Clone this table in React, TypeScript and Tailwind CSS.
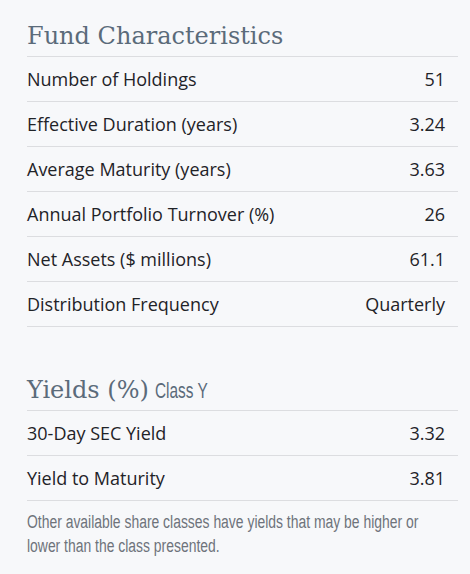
const characteristics = [
  { label: "Number of Holdings", value: "51" },
  { label: "Effective Duration (years)", value: "3.24" },
  { label: "Average Maturity (years)", value: "3.63" },
  { label: "Annual Portfolio Turnover (%)", value: "26" },
  { label: "Net Assets ($ millions)", value: "61.1" },
  { label: "Distribution Frequency", value: "Quarterly" },
];

const yields = [
  { label: "30-Day SEC Yield", value: "3.32" },
  { label: "Yield to Maturity", value: "3.81" },
];

function Row({ label, value }: { label: string; value: string }) {
  return (
    <div className="flex h-[45px] items-center justify-between border-b border-[#dcdde0] pr-[13px] text-[18px] text-[#1f2328]">
      <span>{label}</span>
      <span>{value}</span>
    </div>
  );
}

export default function App() {
  return (
    <div className="h-[574px] w-[470px] overflow-hidden bg-[#f7f8fa] pl-[27px] pr-[12px] pt-[19px] font-['Open_Sans',sans-serif]">
      <h2 className="h-[38px] border-b border-[#dcdde0] font-['DejaVu_Serif',serif] text-[24px] leading-[34px] text-[#5b6b7a]">
        Fund Characteristics
      </h2>
      {characteristics.map((row) => (
        <Row key={row.label} label={row.label} value={row.value} />
      ))}

      <h2 className="mt-[46px] flex h-[38px] items-baseline gap-[6px] border-b border-[#dcdde0] text-[#5b6b7a]">
        <span className="font-['DejaVu_Serif',serif] text-[24px] leading-[34px]">Yields (%)</span>
        <span className="inline-block origin-left scale-x-[0.7] font-['Liberation_Sans',sans-serif] text-[22px]">
          Class Y
        </span>
      </h2>
      {yields.map((row) => (
        <Row key={row.label} label={row.label} value={row.value} />
      ))}
      <p className="mt-[9px] w-[520px] origin-left scale-x-[0.773] font-['Liberation_Sans',sans-serif] text-[18px] leading-[24px] text-[#6e737b]">
        Other available share classes have yields that may be higher or lower than the class presented.
      </p>
    </div>
  );
}
